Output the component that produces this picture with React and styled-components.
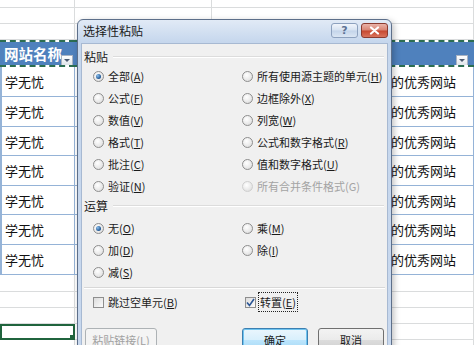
import React from 'react'
import styled, { createGlobalStyle, css } from 'styled-components'

const GlobalStyle = createGlobalStyle`
  html, body { margin: 0; padding: 0; background: #fff; }
  body { font-family: "Noto Sans CJK SC", "Noto Sans", sans-serif; }
`

const Page = styled.div`
  position: relative;
  width: 474px;
  height: 345px;
  overflow: hidden;
  background: #fff;
`

/* ---------- spreadsheet ---------- */
const Sheet = styled.div`
  display: flex;
  flex-direction: column;
`

const Row = styled.div`
  display: grid;
  grid-template-columns: 75px 137px 1fr;
  height: ${p => p.$h}px;
  flex: none;
`

const Cell = styled.div`
  position: relative;
  box-sizing: border-box;
  border-right: 1px solid #dadcdd;
  border-bottom: 1px solid #dadcdd;
  font-size: 13px;
  color: #111;
  display: flex;
  align-items: center;
  overflow: hidden;
  white-space: nowrap;
  ${p => p.$variant === 'head' && css`
    background: #4f81bd;
    background-clip: padding-box;
    color: #fff;
    font-weight: bold;
    font-size: 14.5px;
    border-top: 2px dashed #2c6e52;
    border-bottom: 2px dashed #2c6e52;
    border-right: none;
    padding-left: 4px;
  `}
  ${p => p.$variant === 'data' && css`
    border-bottom: 1px solid #95b3d7;
    border-right: 1px solid #95b3d7;
    padding-left: 4px;
  `}
  ${p => p.$right && css`
    justify-content: flex-end;
    padding-right: 17px;
  `}
  ${p => p.$first && css`
    border-left: 2px solid #95b3d7;
    padding-left: 3px;
  `}
  ${p => p.$selected && css`
    border: 2px solid #20643d;
    &::after {
      content: '';
      position: absolute;
      right: -2px;
      bottom: -2px;
      width: 5px;
      height: 5px;
      background: #20643d;
    }
  `}
`

const Drop = styled.span`
  position: absolute;
  right: ${p => p.$r}px;
  top: 13px;
  width: 12px;
  height: 11px;
  box-sizing: border-box;
  border: 1px solid #a9b3c2;
  background: linear-gradient(#ffffff, #dfe4ea);
  display: flex;
  align-items: center;
  justify-content: center;
  &::before {
    content: '';
    border-left: 3px solid transparent;
    border-right: 3px solid transparent;
    border-top: 3px solid #4b5a70;
  }
`

/* ---------- dialog ---------- */
const Dialog = styled.div`
  position: absolute;
  left: 77px;
  top: 19px;
  width: 315px;
  height: 345px;
  box-sizing: border-box;
  border: 1px solid #5d6f8a;
  border-radius: 6px 6px 0 0;
  background: linear-gradient(#e1eaf6, #c6d7ed 22px, #c8d8ee);
  padding: 0 3px;
  display: flex;
  flex-direction: column;
  box-shadow: 2px 2px 6px rgba(0, 0, 0, 0.25);
`

const TitleBar = styled.div`
  height: 23px;
  flex: none;
  display: flex;
  justify-content: space-between;
  align-items: flex-start;
`

const Title = styled.span`
  font-size: 12px;
  color: #1a1a1a;
  padding: 3px 0 0 2px;
  line-height: 16px;
`

const TitleButtons = styled.div`
  display: flex;
  gap: 3px;
  padding-top: 3px;
`

const CapBtn = styled.span`
  width: 27px;
  height: 15px;
  box-sizing: border-box;
  border-radius: 3px;
  display: flex;
  align-items: center;
  justify-content: center;
  font-size: 11px;
  font-weight: bold;
  font-family: "DejaVu Sans", sans-serif;
  ${p => p.$close ? css`
    border: 1px solid #8b3b30;
    background: linear-gradient(#eab2a8, #d88473 48%, #c6472f 52%, #d9735c);
  ` : css`
    border: 1px solid #8da1be;
    color: #5d7294;
    background: linear-gradient(#f1f5fb, #d6e2f1 48%, #c3d4ea 52%, #dbe6f3);
  `}
`

const Body = styled.div`
  flex: 1;
  background: #f0f0f0;
  border: 1px solid #a7b9d2;
  border-bottom: none;
  display: flex;
  flex-direction: column;
  font-size: 11px;
  color: #1a1a1a;
`

const GroupHead = styled.div`
  height: 17px;
  margin-top: ${p => p.$mt || 0}px;
  padding-left: 2px;
  padding-right: 3px;
  display: flex;
  align-items: center;
  gap: 5px;
  font-size: 12px;
  &::after {
    content: '';
    flex: 1;
    height: 1px;
    background: #dcdcdc;
    box-shadow: 0 1px 0 #fff;
  }
`

const OptGrid = styled.div`
  display: grid;
  grid-template-columns: ${p => p.$col}px 1fr;
  grid-auto-flow: column;
  grid-template-rows: repeat(${p => p.$rows}, 22px);
  margin: ${p => p.$mt || 0}px 0 0 11px;
`

const Opt = styled.label`
  display: flex;
  align-items: center;
  gap: 4px;
  color: ${p => p.$disabled ? '#a3a3a3' : '#1a1a1a'};
  white-space: nowrap;
`

const RadioDot = styled.span`
  position: relative;
  flex: none;
  width: 11px;
  height: 11px;
  box-sizing: border-box;
  border-radius: 50%;
  border: 1px solid ${p => p.$disabled ? '#cfcfcf' : '#8e8e8e'};
  background: radial-gradient(circle at 40% 35%, #ffffff, #e6e6e6 65%, #cfcfcf);
  ${p => p.$checked && css`
    &::after {
      content: '';
      position: absolute;
      inset: 2px;
      border-radius: 50%;
      background: radial-gradient(circle at 35% 35%, #8cc0ee, #1d5491 70%);
    }
  `}
`

const Box = styled.span`
  flex: none;
  width: 11px;
  height: 11px;
  box-sizing: border-box;
  border: 1px solid #8e8e8e;
  background: linear-gradient(135deg, #dcdcdc, #fbfbfb);
  display: flex;
  align-items: center;
  justify-content: center;
`

const Focus = styled.span`
  border: 1px dotted #222;
  padding: 1px 1px;
  margin-left: -2px;
`

const Separator = styled.div`
  height: 1px;
  margin: 4px 2px 0;
  background: #d8d8d8;
  box-shadow: 0 1px 0 #fff;
`

const ButtonRow = styled.div`
  display: flex;
  margin-top: 15px;
  padding: 0 3px;
`

const Btn = styled.span`
  width: ${p => p.$w}px;
  height: 23px;
  flex: none;
  box-sizing: border-box;
  border-radius: 3px;
  display: flex;
  align-items: center;
  justify-content: center;
  font-size: 11px;
  margin-left: ${p => p.$ml || 0}px;
  border: 1px solid #707070;
  background: linear-gradient(#f3f3f3, #ebebeb 50%, #dddddd 50%, #cfcfcf);
  ${p => p.$disabled && css`
    border-color: #adb2b5;
    background: #f4f4f4;
    color: #a0a0a0;
  `}
  ${p => p.$focus && css`
    border-color: #3c7fb1;
    box-shadow: inset 0 0 0 1px #6fc4f0;
    background: linear-gradient(#eaf6fd, #d9f0fc 50%, #bee6fd 50%, #a7d9f5);
  `}
`

const Radio = ({ checked, disabled, children }) => (
  <Opt $disabled={disabled}>
    <RadioDot $checked={checked} $disabled={disabled} />
    <span>{children}</span>
  </Opt>
)

const Check = ({ checked, focus, children }) => (
  <Opt>
    <Box>
      {checked && (
        <svg width="9" height="9" viewBox="0 0 9 9">
          <path d="M1 4.5 L3.5 7.5 L8 1" fill="none" stroke="#2a5595" strokeWidth="1.6" />
        </svg>
      )}
    </Box>
    {focus ? <Focus>{children}</Focus> : <span>{children}</span>}
  </Opt>
)

const dataRows = [30, 30, 29, 30, 29, 30, 30]

export default function App() {
  return (
    <Page>
      <GlobalStyle />
      <Sheet>
        <Row $h={8}><Cell /><Cell /><Cell /></Row>
        <Row $h={16}><Cell /><Cell /><Cell /></Row>
        <Row $h={16}><Cell /><Cell /><Cell /></Row>
        <Row $h={27}>
          <Cell $variant="head">网站名称<Drop $r={2} /></Cell>
          <Cell $variant="head" />
          <Cell $variant="head"><Drop $r={6} /></Cell>
        </Row>
        {dataRows.map((h, i) => (
          <Row $h={h} key={i}>
            <Cell $variant="data" $first>学无忧</Cell>
            <Cell $variant="data" />
            <Cell $variant="data" $right>学无忧是一个学习的优秀网站</Cell>
          </Row>
        ))}
        <Row $h={17}><Cell /><Cell /><Cell /></Row>
        <Row $h={16}><Cell /><Cell /><Cell /></Row>
        <Row $h={16}><Cell /><Cell /><Cell /></Row>
        <Row $h={16}><Cell $selected /><Cell /><Cell /></Row>
        <Row $h={16}><Cell /><Cell /><Cell /></Row>
      </Sheet>

      <Dialog>
        <TitleBar>
          <Title>选择性粘贴</Title>
          <TitleButtons>
            <CapBtn>?</CapBtn>
            <CapBtn $close>
              <svg width="11" height="9" viewBox="0 0 11 9">
                <path d="M2 1.5 L9 7.5 M9 1.5 L2 7.5" stroke="#fff" strokeWidth="2.2" strokeLinecap="round" />
              </svg>
            </CapBtn>
          </TitleButtons>
        </TitleBar>
        <Body>
          <GroupHead $mt={4}>粘贴</GroupHead>
          <OptGrid $col={149} $rows={6}>
            <Radio checked>全部(<u>A</u>)</Radio>
            <Radio>公式(<u>F</u>)</Radio>
            <Radio>数值(<u>V</u>)</Radio>
            <Radio>格式(<u>T</u>)</Radio>
            <Radio>批注(<u>C</u>)</Radio>
            <Radio>验证(<u>N</u>)</Radio>
            <Radio>所有使用源主题的单元(<u>H</u>)</Radio>
            <Radio>边框除外(<u>X</u>)</Radio>
            <Radio>列宽(<u>W</u>)</Radio>
            <Radio>公式和数字格式(<u>R</u>)</Radio>
            <Radio>值和数字格式(<u>U</u>)</Radio>
            <Radio disabled>所有合并条件格式(G)</Radio>
          </OptGrid>
          <GroupHead>运算</GroupHead>
          <OptGrid $col={149} $rows={3} $mt={3}>
            <Radio checked>无(<u>O</u>)</Radio>
            <Radio>加(<u>D</u>)</Radio>
            <Radio>减(<u>S</u>)</Radio>
            <Radio>乘(<u>M</u>)</Radio>
            <Radio>除(<u>I</u>)</Radio>
          </OptGrid>
          <Separator />
          <OptGrid $col={152} $rows={1} $mt={3}>
            <Check>跳过空单元(<u>B</u>)</Check>
            <Check checked focus>转置(<u>E</u>)</Check>
          </OptGrid>
          <ButtonRow>
            <Btn $w={72} $disabled>粘贴链接(L)</Btn>
            <Btn $w={66} $ml={85} $focus>确定</Btn>
            <Btn $w={66} $ml={10}>取消</Btn>
          </ButtonRow>
        </Body>
      </Dialog>
    </Page>
  )
}
